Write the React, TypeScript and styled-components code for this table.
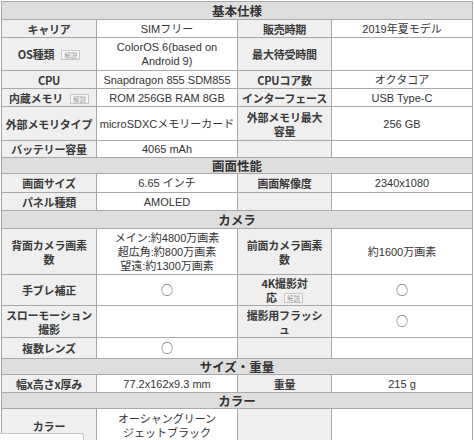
import React from "react";
import styled, { createGlobalStyle } from "styled-components";

const Global = createGlobalStyle`
  html, body { margin: 0; padding: 0; background: #ffffff; }
  body { font-family: "Liberation Sans", "Noto Sans CJK JP", sans-serif; color: #333; }
`;

const Page = styled.div`
  position: relative;
  width: 474px;
  height: 440px;
  overflow: hidden;
  padding: 1px 0 0 1px;
  box-sizing: border-box;
`;

const Table = styled.table`
  width: 471px;
  border-collapse: collapse;
  table-layout: fixed;
  border: 1px solid #a8a8a8;
  font-size: 11px;
  line-height: 14px;
`;

const Section = styled.th<{ $h?: number; $tight?: boolean }>`
  background: #dedede;
  border: 1px solid #a8a8a8;
  font-family: "Noto Sans CJK JP", sans-serif;
  font-weight: bold;
  font-size: 12.5px;
  color: #333;
  padding: ${(p) => (p.$tight ? "0" : "1px 0")};
  height: ${(p) => p.$h ?? 15}px;
  text-align: center;
  white-space: nowrap;
`;

const Label = styled.th<{ $h?: number }>`
  background: #efefef;
  border: 1px solid #a8a8a8;
  font-family: "Noto Sans CJK JP", sans-serif;
  font-weight: bold;
  font-size: 11px;
  line-height: 14px;
  letter-spacing: -0.2px;
  color: #3a3a3a;
  padding: 1px 0;
  text-align: center;
  white-space: nowrap;
  overflow: hidden;
  height: ${(p) => p.$h ?? 15}px;
`;

const Value = styled.td<{ $h?: number }>`
  background: #ffffff;
  border: 1px solid #a8a8a8;
  color: #333;
  padding: 1px 2px;
  text-align: center;
  white-space: nowrap;
  overflow: hidden;
  height: ${(p) => p.$h ?? 15}px;
`;

const Mark = styled.span`
  font-family: "Noto Sans CJK JP", sans-serif;
  font-size: 12px;
  line-height: 14px;
  color: #444;
`;

const Badge = styled.span`
  display: inline-block;
  margin-left: 7px;
  padding: 0 2px;
  border: 1px solid #c8c8c8;
  background: #f8f8f8;
  color: #999;
  font-size: 6.5px;
  line-height: 8px;
  font-weight: normal;
  letter-spacing: 0;
  vertical-align: 1px;
`;

const Popup = styled.div`
  position: absolute;
  left: 0;
  top: 433px;
  width: 83px;
  height: 20px;
  background: #ffffff;
  border-top: 1px solid #c8c8c8;
  border-right: 1px solid #c8c8c8;
  border-top-right-radius: 3px;
`;

const Ex = () => <Badge>解説</Badge>;
const Yes = () => <Mark>○</Mark>;

export default function App() {
  return (
    <Page>
      <Global />
      <Table>
        <colgroup>
          <col style={{ width: 95 }} />
          <col style={{ width: 141 }} />
          <col style={{ width: 94 }} />
          <col style={{ width: 141 }} />
        </colgroup>
        <tbody>
          <tr><Section colSpan={4}>基本仕様</Section></tr>
          <tr>
            <Label>キャリア</Label><Value>SIMフリー</Value>
            <Label>販売時期</Label><Value>2019年夏モデル</Value>
          </tr>
          <tr>
            <Label $h={30}>OS種類<Ex /></Label><Value $h={30}>ColorOS 6(based on<br />Android 9)</Value>
            <Label $h={30}>最大待受時間</Label><Value $h={30}></Value>
          </tr>
          <tr>
            <Label>CPU</Label><Value>Snapdragon 855 SDM855</Value>
            <Label>CPUコア数</Label><Value>オクタコア</Value>
          </tr>
          <tr>
            <Label>内蔵メモリ<Ex /></Label><Value>ROM 256GB RAM 8GB</Value>
            <Label>インターフェース</Label><Value>USB Type-C</Value>
          </tr>
          <tr>
            <Label $h={31}>外部メモリタイプ</Label><Value $h={31}>microSDXCメモリーカード</Value>
            <Label $h={31}>外部メモリ最大<br />容量</Label><Value $h={31}>256 GB</Value>
          </tr>
          <tr>
            <Label $h={14}>バッテリー容量</Label><Value $h={14}>4065 mAh</Value>
            <Label $h={14}></Label><Value $h={14}></Value>
          </tr>
          <tr><Section colSpan={4} $h={15} $tight>画面性能</Section></tr>
          <tr>
            <Label $h={16}>画面サイズ</Label><Value $h={16}>6.65 インチ</Value>
            <Label $h={16}>画面解像度</Label><Value $h={16}>2340x1080</Value>
          </tr>
          <tr>
            <Label>パネル種類</Label><Value>AMOLED</Value>
            <Label></Label><Value></Value>
          </tr>
          <tr><Section colSpan={4}>カメラ</Section></tr>
          <tr>
            <Label $h={43}>背面カメラ画素<br />数</Label>
            <Value $h={43}>メイン:約4800万画素<br />超広角:約800万画素<br />望遠:約1300万画素</Value>
            <Label $h={43}>前面カメラ画素<br />数</Label><Value $h={43}>約1600万画素</Value>
          </tr>
          <tr>
            <Label $h={26}>手ブレ補正</Label><Value $h={26}><Yes /></Value>
            <Label $h={26}>4K撮影対<br />応<Ex /></Label><Value $h={26}><Yes /></Value>
          </tr>
          <tr>
            <Label $h={29}>スローモーション<br />撮影</Label><Value $h={29}></Value>
            <Label $h={29}>撮影用フラッシ<br />ュ</Label><Value $h={29}><Yes /></Value>
          </tr>
          <tr>
            <Label $h={18}>複数レンズ</Label><Value $h={18}><Yes /></Value>
            <Label $h={18}></Label><Value $h={18}></Value>
          </tr>
          <tr><Section colSpan={4} $h={15} $tight>サイズ・重量</Section></tr>
          <tr>
            <Label>幅x高さx厚み</Label><Value>77.2x162x9.3 mm</Value>
            <Label>重量</Label><Value>215 g</Value>
          </tr>
          <tr><Section colSpan={4} $h={15} $tight>カラー</Section></tr>
          <tr>
            <Label $h={31}>カラー</Label><Value $h={31}>オーシャングリーン<br />ジェットブラック</Value>
            <Label $h={31}></Label><Value $h={31}></Value>
          </tr>
        </tbody>
      </Table>
      <Popup />
    </Page>
  );
}
